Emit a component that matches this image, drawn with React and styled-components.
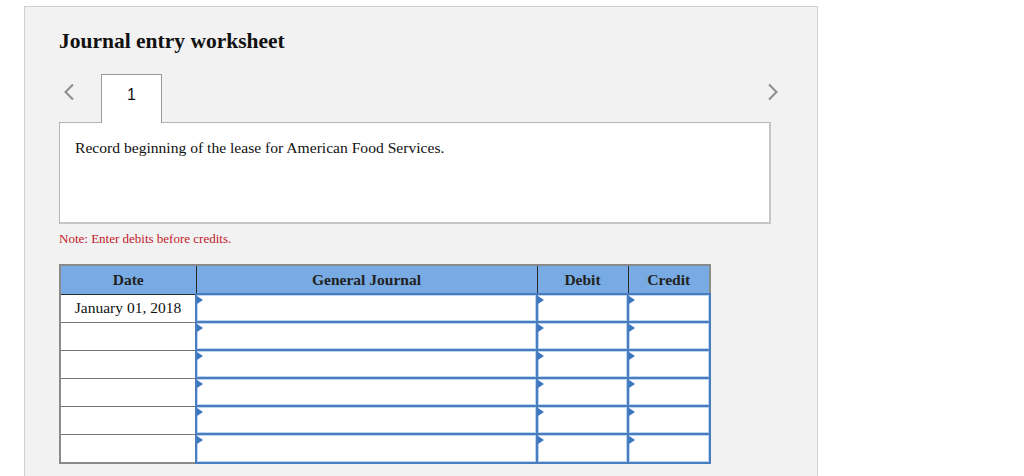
import React from 'react';
import styled, { createGlobalStyle } from 'styled-components';

const GlobalStyle = createGlobalStyle`
  html, body {
    margin: 0;
    padding: 0;
    background: #ffffff;
    font-family: "Liberation Serif", "Times New Roman", serif;
    color: #111;
  }
`;

const Panel = styled.div`
  margin: 6px 0 0 24px;
  width: 758px;
  height: 520px;
  padding: 22px 0 0 34px;
  background: #f2f2f2;
  border: 1px solid #cfcfcf;
  border-bottom: none;
`;

const Title = styled.h2`
  margin: 0;
  font-size: 21.5px;
  line-height: 24px;
  font-weight: bold;
  color: #111;
`;

const TabRow = styled.div`
  display: flex;
  align-items: stretch;
  width: 720px;
  height: 48px;
  margin-top: 21px;
  position: relative;
  z-index: 1;
`;

const Chevron = styled.div`
  width: ${p => p.$w}px;
  display: flex;
  align-items: flex-start;
  justify-content: ${p => (p.$right ? 'flex-end' : 'flex-start')};
  padding-left: ${p => (p.$right ? 0 : 4)}px;
  padding-top: 9px;
  box-sizing: border-box;
`;

const Tab = styled.div`
  width: 61px;
  box-sizing: border-box;
  border: 1px solid #9a9a9a;
  border-bottom: none;
  background: #fff;
  height: 49px;
  display: flex;
  align-items: center;
  justify-content: center;
  font-family: "Liberation Sans", Arial, sans-serif;
  font-size: 16px;
  padding-bottom: 8px;
`;

const Spacer = styled.div`
  flex: 1;
`;

const Prompt = styled.div`
  width: 712px;
  height: 102px;
  box-sizing: border-box;
  background: #fff;
  border: 1px solid #b4b4b4;
  border-right: 2px solid #c6c6c6;
  border-bottom: 2px solid #c6c6c6;
  padding: 16px 15px;
  font-size: 15.6px;
  line-height: 18px;
`;

const Note = styled.div`
  margin-top: 7px;
  font-size: 13px;
  line-height: 16px;
  color: #c0202a;
`;

const Table = styled.table`
  margin-top: 17px;
  border-collapse: collapse;
  table-layout: fixed;
  width: 650px;
  border: 2px solid #8a8a8a;
`;

const HeadCell = styled.th`
  background: #78abe3;
  height: 27px;
  padding: 0;
  font-size: 15.5px;
  font-weight: bold;
  color: #222;
  text-align: center;
  border-left: 1px solid #2a2a2a;
  border-bottom: 1px solid #2a2a2a;
  &:first-child {
    border-left: none;
  }
`;

const DateCell = styled.td`
  height: 27px;
  padding: 0;
  background: #fff;
  border: 1px solid #777;
  text-align: center;
  font-size: 15.5px;
`;

const InputCell = styled.td`
  height: 26px;
  padding: 0;
  background: #fff;
  border: 2px solid #4a7dbd;
  box-shadow: inset 0 0 0 1px #bcd5f3;
  position: relative;
  &::before {
    content: '';
    position: absolute;
    left: 0;
    top: 1px;
    border-left: 6px solid #3d76c0;
    border-top: 4px solid transparent;
    border-bottom: 4px solid transparent;
  }
`;

const ChevronIcon = ({ dir }) => (
  <svg width="12" height="18" viewBox="0 0 12 18">
    <path
      d={dir === 'left' ? 'M10 1.5 L2.5 9 L10 16.5' : 'M2 1.5 L9.5 9 L2 16.5'}
      fill="none"
      stroke="#8c8c8c"
      strokeWidth="2"
    />
  </svg>
);

const rows = ['January 01, 2018', '', '', '', '', ''];

export default function App() {
  return (
    <>
      <GlobalStyle />
      <Panel>
        <Title>Journal entry worksheet</Title>
        <TabRow>
          <Chevron $w={42}>
            <ChevronIcon dir="left" />
          </Chevron>
          <Tab>1</Tab>
          <Spacer />
          <Chevron $w={20} $right>
            <ChevronIcon dir="right" />
          </Chevron>
        </TabRow>
        <Prompt>Record beginning of the lease for American Food Services.</Prompt>
        <Note>Note: Enter debits before credits.</Note>
        <Table>
          <colgroup>
            <col style={{ width: 136 }} />
            <col style={{ width: 341 }} />
            <col style={{ width: 91 }} />
            <col style={{ width: 82 }} />
          </colgroup>
          <thead>
            <tr>
              <HeadCell>Date</HeadCell>
              <HeadCell>General Journal</HeadCell>
              <HeadCell>Debit</HeadCell>
              <HeadCell>Credit</HeadCell>
            </tr>
          </thead>
          <tbody>
            {rows.map((d, i) => (
              <tr key={i}>
                <DateCell>{d}</DateCell>
                <InputCell />
                <InputCell />
                <InputCell />
              </tr>
            ))}
          </tbody>
        </Table>
      </Panel>
    </>
  );
}
